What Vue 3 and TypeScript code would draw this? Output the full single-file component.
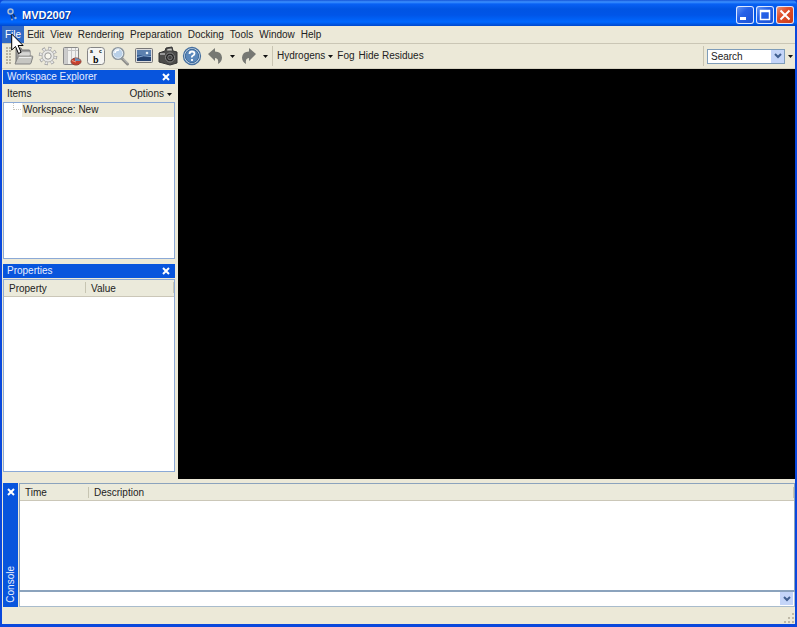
<script setup lang="ts">
import { ref } from 'vue'

const menus: string[] = ['File', 'Edit', 'View', 'Rendering', 'Preparation', 'Docking', 'Tools', 'Window', 'Help']
const activeMenu = ref<string>('File')
const search = ref<string>('Search')
const command = ref<string>('')
</script>

<template>
  <div class="window">
    <header class="titlebar">
      <svg class="app-icon" width="14" height="16" viewBox="0 0 14 16" aria-hidden="true">
        <circle cx="4.500" cy="4.500" r="2.500" fill="#1763d8" stroke="#a9bad0" stroke-width="1.500" />
        <path d="M5 8 6 12M7 7l2 3" stroke="#14366f" stroke-width="1.500" />
        <circle cx="6" cy="12.500" r="1" fill="#8fa9cd" />
        <circle cx="9.500" cy="11" r="1.200" fill="#98b5dd" />
      </svg>
      <h1 class="title">MVD2007</h1>
      <div class="controls">
        <button class="control" aria-label="Minimize">
          <svg width="18" height="18" viewBox="0 0 18 18"><path d="M4 12.500h6" stroke="#fff" stroke-width="3" /></svg>
        </button>
        <button class="control" aria-label="Maximize">
          <svg width="18" height="18" viewBox="0 0 18 18"><path d="M4.500 4.500h9v9h-9zM4 5.500h10" fill="none" stroke="#fff" stroke-width="1.500" /></svg>
        </button>
        <button class="control close" aria-label="Close">
          <svg width="18" height="18" viewBox="0 0 18 18"><path d="m4.500 4.500 9 9m0-9-9 9" stroke="#fff" stroke-width="2" /></svg>
        </button>
      </div>
    </header>

    <div class="body">
      <nav class="menubar">
        <button v-for="m in menus" :key="m" class="menu" :class="{ active: m === activeMenu }" @click="activeMenu = m">{{ m }}</button>
      </nav>

      <div class="toolbar">
        <span class="grip"></span>
        <button class="tool" aria-label="Open">
          <svg width="20" height="20" viewBox="0 0 20 20">
            <path d="M2 17V3q0-1 1-1h4l1 2h7q1 0 1 1v12z" fill="#999" stroke="#777" />
            <path d="M5 6h11v9H5z" fill="#f2f2ef" stroke="#aaa" />
            <path d="M6 8h9" stroke="#bbb" />
            <path d="M1 18 4 11q.3-1 1-1h13q1 0 .8 1L17 17q-.3 1-1 1z" fill="#c6c6c2" stroke="#858583" />
            <path d="M5 11.500h12" stroke="#eee" />
          </svg>
        </button>
        <button class="tool" aria-label="Settings">
          <svg width="20" height="20" viewBox="0 0 20 20">
            <circle cx="10" cy="10" r="7.500" fill="none" stroke="#999" stroke-width="3.500" stroke-dasharray="3 2.890" />
            <circle cx="10" cy="10" r="7.300" fill="none" stroke="#e9e9e9" stroke-width="2.500" stroke-dasharray="2 3.730" stroke-dashoffset="-.5" />
            <circle cx="10" cy="10" r="6" fill="#e8e8e6" stroke="#b2b2b0" />
            <circle cx="10" cy="10" r="3.200" fill="#f7f6ee" stroke="#999" />
          </svg>
        </button>
        <button class="tool" aria-label="Data table">
          <svg width="20" height="20" viewBox="0 0 20 20">
            <rect x="1.500" y="1.500" width="15" height="17" rx="1" fill="#f1f1ef" stroke="#888" />
            <path d="M2 4.500h14M5.500 2v16M9.500 2v16M13.500 2v10" stroke="#c5c5c5" />
            <path d="M2 2h3v16H2z" fill="#ccc" />
            <ellipse cx="14" cy="15.500" rx="5" ry="3.500" fill="#c63f2d" stroke="#8f4438" />
            <path d="M13 15V12q5 0 5.500 3z" fill="#6e90b8" />
            <path d="m10 14.500 4 1.500" stroke="#ef9f8c" />
          </svg>
        </button>
        <button class="tool" aria-label="Labels">
          <svg width="20" height="20" viewBox="0 0 20 20">
            <rect x="1.500" y="1.500" width="17" height="17" rx="3" fill="#f5f5f3" stroke="#858585" />
            <text x="4" y="7" class="glyph-small">a</text>
            <text x="13" y="7" class="glyph-small">c</text>
            <text x="7" y="17" class="glyph-large">b</text>
          </svg>
        </button>
        <button class="tool" aria-label="Zoom">
          <svg width="20" height="20" viewBox="0 0 20 20">
            <path d="m11.500 12 6 6" stroke="#8e8e8a" stroke-width="3" stroke-linecap="round" />
            <path d="m13 12.500 5 5" stroke="#ccc" />
            <circle cx="8" cy="7.500" r="5.800" fill="#b9d0e8" stroke="#8d979f" stroke-width="1.500" />
            <circle cx="8" cy="7.500" r="4.700" fill="none" stroke="#e5edf4" />
            <path d="M5 7q0-3 4-3" fill="none" stroke="#fff" stroke-width="1.500" />
          </svg>
        </button>
        <button class="tool" aria-label="Display">
          <svg width="20" height="20" viewBox="0 0 20 20">
            <rect x="1.500" y="2.500" width="17" height="14" rx="1" fill="#ddd" stroke="#777" />
            <path d="M3 4h14v11H3z" fill="#345b91" />
            <path d="M3 4h14v5H3z" fill="#5c80ae" />
            <path d="M3 12q5-3 14-1v4H3z" fill="#244270" />
            <path d="M3 11.500q6-3 14-1" fill="none" stroke="#88a9cf" />
            <circle cx="13" cy="7" r="1.300" fill="#e5eef7" />
          </svg>
        </button>
        <button class="tool" aria-label="Screenshot">
          <svg width="20" height="20" viewBox="0 0 20 20">
            <path d="M1 7 7 5l1-3 6-1 1 4 4 1v11l-7 2L1 16z" fill="#4c4c4a" stroke="#333" />
            <path d="m9.500 3 4-.5.500 2H9z" fill="#c7c7c2" />
            <path d="M2 8h5" stroke="#999" stroke-width="2" />
            <circle cx="12" cy="11.500" r="4.500" fill="#222" stroke="#8a8a8a" />
            <circle cx="12" cy="11.500" r="2.300" fill="#444" stroke="#999" stroke-width=".7" />
          </svg>
        </button>
        <button class="tool" aria-label="Help">
          <svg width="20" height="20" viewBox="0 0 20 20">
            <circle cx="10" cy="10" r="8.500" fill="#dce8f2" stroke="#456f9f" stroke-width="1.300" />
            <circle cx="10" cy="10" r="6.700" fill="#5b88bb" stroke="#3c6898" />
            <path d="M7.500 8q0-2.500 2.500-2.500t2.500 2q0 1.300-1.500 2T10 11.500M10 13v2" fill="none" stroke="#fff" stroke-width="1.800" />
          </svg>
        </button>
        <button class="history" aria-label="Undo">
          <svg width="17" height="18" viewBox="0 0 17 18"><path d="M1 7 8 1v3.500q6.500 0 7 6 0 4-4 6.500 1-6-3-6v3z" fill="#767873" /></svg>
          <svg width="5" height="3" viewBox="0 0 5 3"><path d="M0 0h5L2.500 3z" fill="#111" /></svg>
        </button>
        <button class="history" aria-label="Redo">
          <svg width="17" height="18" viewBox="0 0 17 18"><path d="M16 7 9 1v3.500q-6.500 0-7 6 0 4 4 6.500-1-6 3-6v3z" fill="#767873" /></svg>
          <svg width="5" height="3" viewBox="0 0 5 3"><path d="M0 0h5L2.500 3z" fill="#111" /></svg>
        </button>
        <span class="divider"></span>
        <button class="text-tool">Hydrogens
          <svg width="5" height="3" viewBox="0 0 5 3"><path d="M0 0h5L2.500 3z" fill="#111" /></svg>
        </button>
        <button class="text-tool">Fog</button>
        <button class="text-tool">Hide Residues</button>
        <div class="search-area">
          <span class="select-wrap">
            <select v-model="search" class="select" aria-label="Search"><option>Search</option></select>
            <span class="drop"><svg width="8" height="6" viewBox="0 0 8 6"><path d="m1 1 3 3 3-3" fill="none" stroke="#405f90" stroke-width="2" /></svg></span>
          </span>
          <svg width="5" height="3" viewBox="0 0 5 3"><path d="M0 0h5L2.500 3z" fill="#111" /></svg>
        </div>
      </div>

      <main class="main">
        <aside class="docks">
          <section class="dock explorer">
            <div class="dock-title">
              <h2 class="dock-name">Workspace Explorer</h2>
              <button class="dock-close" aria-label="Close Workspace Explorer">
                <svg width="8" height="8" viewBox="0 0 8 8"><path d="m1 1 6 6m0-6L1 7" stroke="#fff" stroke-width="2" /></svg>
              </button>
            </div>
            <div class="dock-tools">
              <span>Items</span>
              <button class="text-tool">Options
                <svg width="5" height="3" viewBox="0 0 5 3"><path d="M0 0h5L2.500 3z" fill="#111" /></svg>
              </button>
            </div>
            <ul class="tree"><li class="node"><span class="branch"></span><span class="node-name">Workspace: New</span></li></ul>
          </section>
          <section class="dock properties">
            <div class="dock-title">
              <h2 class="dock-name">Properties</h2>
              <button class="dock-close" aria-label="Close Properties">
                <svg width="8" height="8" viewBox="0 0 8 8"><path d="m1 1 6 6m0-6L1 7" stroke="#fff" stroke-width="2" /></svg>
              </button>
            </div>
            <div class="table-area">
              <table class="table">
                <thead><tr><th class="property-col">Property</th><th>Value</th></tr></thead>
                <tbody></tbody>
              </table>
            </div>
          </section>
        </aside>
        <div class="viewport"></div>
      </main>

      <section class="console">
        <div class="console-side">
          <button class="dock-close" aria-label="Close Console">
            <svg width="8" height="8" viewBox="0 0 8 8"><path d="m1 1 6 6m0-6L1 7" stroke="#fff" stroke-width="2" /></svg>
          </button>
          <h2 class="console-name">Console</h2>
        </div>
        <div class="console-content">
          <div class="log">
            <table class="table">
              <thead><tr><th class="time-col">Time</th><th>Description</th></tr></thead>
              <tbody></tbody>
            </table>
          </div>
          <div class="command">
            <input v-model="command" class="command-input" type="text" aria-label="Console command" />
            <button class="drop" aria-label="Command history"><svg width="8" height="6" viewBox="0 0 8 6"><path d="m1 1 3 3 3-3" fill="none" stroke="#405f90" stroke-width="2" /></svg></button>
          </div>
        </div>
      </section>

      <footer class="status">
        <svg width="10" height="10" viewBox="0 0 10 10">
          <path d="M8 0h2v2H8zM4 4h2v2H4zM8 4h2v2H8zM0 8h2v2H0zM4 8h2v2H4zM8 8h2v2H8z" fill="#bfb9a7" />
        </svg>
      </footer>
    </div>

    <svg class="cursor" width="13" height="22" viewBox="0 0 13 22" aria-hidden="true">
      <path d="M.7 1v16l3.800-3.500 3 7 2.600-1.200-3-6.800h5z" fill="#fff" stroke="#000" />
    </svg>
  </div>
</template>

<style>
body {
  margin: 0;
}
</style>

<style scoped>
* {
  box-sizing: border-box;
}
.window {
  position: relative;
  display: flex;
  flex-direction: column;
  min-height: 100vh;
  padding: 0 2px 3px;
  background: #0a48dc;
  color: #222;
  font: 10px/14px "Liberation Sans", Arial, sans-serif;
}
button {
  display: flex;
  align-items: center;
  justify-content: center;
  margin: 0;
  padding: 0;
  border: 0;
  background: none;
  color: inherit;
  font: inherit;
}
svg {
  display: block;
  flex: none;
}
h1,
h2 {
  margin: 0;
  font: inherit;
}
.titlebar {
  display: flex;
  align-items: center;
  height: 26px;
  margin: 0 -2px;
  padding: 3px 3px 0 6px;
  border-radius: 5px 5px 0 0;
  background: linear-gradient(#1454d8 0, #3c91ff 2px, #0861f4 4px, #0054e3 9px, #0055e8 15px, #0068ff 22px, #0048cc 26px);
}
.title {
  flex: 1;
  padding-left: 2px;
  color: #fff;
  font: bold 11px/16px "Liberation Sans", Arial, sans-serif;
  text-shadow: 1px 1px #0a318c;
}
.controls {
  display: flex;
  gap: 2px;
}
.control {
  width: 18px;
  height: 18px;
  border-radius: 3px;
  background: linear-gradient(135deg, #6d9cf5, #2662e8 40%, #1b50d3);
  box-shadow: inset 0 0 0 1px #dce7ff;
}
.close {
  background: linear-gradient(135deg, #f09a7c, #e0502c 40%, #c93a16);
}
.body {
  display: flex;
  flex: 1;
  flex-direction: column;
  background: #ece9d8;
}
.menubar {
  display: flex;
  height: 18px;
  border-bottom: 1px solid #cac6b5;
}
.menu {
  padding: 0 3px;
}
.menu.active {
  background: #316ac5;
  color: #fff;
}
.toolbar {
  display: flex;
  align-items: center;
  height: 25px;
  padding: 0 0 0 4px;
  border-bottom: 1px solid #d6d2c1;
}
.grip {
  width: 5px;
  height: 18px;
  margin-right: 1px;
  background: radial-gradient(circle at 1px 1px, #b8b3a1 1px, transparent 1px) 0 0 / 3px 3px;
}
.tool {
  width: 24px;
  height: 22px;
}
.history {
  gap: 6px;
  width: 33px;
}
.divider {
  width: 1px;
  height: 20px;
  margin: 0 2px;
  background: #c9c5b2;
}
.text-tool {
  gap: 3px;
  padding: 0 2px;
}
.search-area {
  display: flex;
  align-items: center;
  gap: 3px;
  height: 20px;
  margin-left: auto;
  padding: 0 2px 0 3px;
  border-left: 1px solid #c9c5b2;
}
.select-wrap {
  position: relative;
  display: flex;
  width: 78px;
  height: 15px;
}
.select {
  width: 100%;
  padding: 0 3px;
  border: 1px solid #7f9db9;
  border-radius: 0;
  appearance: none;
  background: #fff;
  color: #222;
  font: inherit;
}
.drop {
  display: flex;
  align-items: center;
  justify-content: center;
  width: 13px;
  height: 13px;
  background: #c4d5f8;
}
.select-wrap .drop {
  position: absolute;
  top: 1px;
  right: 1px;
  pointer-events: none;
}
.main {
  display: flex;
  flex: 1;
}
.docks {
  display: flex;
  flex-direction: column;
  gap: 5px;
  width: 176px;
  padding: 1px 3px 7px 1px;
}
.dock {
  display: flex;
  flex-direction: column;
}
.explorer {
  flex: 189 1 0;
}
.properties {
  flex: 209 1 0;
}
.dock-title {
  display: flex;
  align-items: center;
  justify-content: space-between;
  height: 14px;
  padding: 0 5px 0 4px;
  background: #0855dd;
  color: #e8efff;
}
.dock-tools {
  display: flex;
  align-items: center;
  justify-content: space-between;
  height: 18px;
  padding: 2px 1px 0 4px;
}
.tree {
  flex: 1;
  margin: 0;
  padding: 0;
  border: 1px solid #8ba9d6;
  background: #fff;
  list-style: none;
}
.node {
  display: flex;
}
.branch {
  width: 8px;
  height: 7px;
  margin-left: 9px;
  border: dotted #c8c5bb;
  border-width: 0 0 1px 1px;
}
.node-name {
  flex: 1;
  margin-left: 1px;
  padding-left: 1px;
  background: #ece9d8;
}
.table-area {
  flex: 1;
  margin-top: 1px;
  border: 1px solid #8ba9d6;
  background: #fff;
}
.table {
  width: 100%;
  border-collapse: separate;
  border-spacing: 0;
  table-layout: fixed;
}
.table th {
  height: 17px;
  padding: 2px 5px 0;
  border-bottom: 1px solid #cbc7b8;
  background: linear-gradient(#c7c5b2, #c7c5b2) right center / 1px 11px no-repeat #ebeadb;
  font-weight: normal;
  text-align: left;
}
.property-col {
  width: 82px;
}
.time-col {
  width: 69px;
}
.viewport {
  flex: 1;
  background: #000;
}
.console {
  display: flex;
  height: 124px;
  margin-top: 4px;
}
.console-side {
  display: flex;
  flex-direction: column;
  align-items: center;
  justify-content: space-between;
  width: 15px;
  margin: 0 1px;
  padding: 5px 0 4px;
  background: #0855dd;
  color: #e8efff;
}
.console-name {
  transform: rotate(180deg);
  writing-mode: vertical-rl;
}
.console-content {
  display: flex;
  flex: 1;
  flex-direction: column;
}
.log {
  flex: 1;
  border: 1px solid #8ba3bd;
  border-bottom-width: 2px;
  background: #fff;
}
.command {
  display: flex;
  height: 15px;
  padding-right: 1px;
  border: 1px solid #a9bccc;
  border-top: 0;
  background: #fff;
}
.command-input {
  flex: 1;
  min-width: 0;
  padding: 0 3px;
  border: 0;
  background: transparent;
  font: inherit;
}
.status {
  display: flex;
  align-items: flex-end;
  justify-content: flex-end;
  height: 17px;
  padding: 1px;
}
.glyph-small {
  font: bold 5px "Liberation Sans", Arial, sans-serif;
}
.glyph-large {
  font: bold 9px "Liberation Sans", Arial, sans-serif;
}
.cursor {
  position: absolute;
  top: 33px;
  left: 11px;
}
</style>
